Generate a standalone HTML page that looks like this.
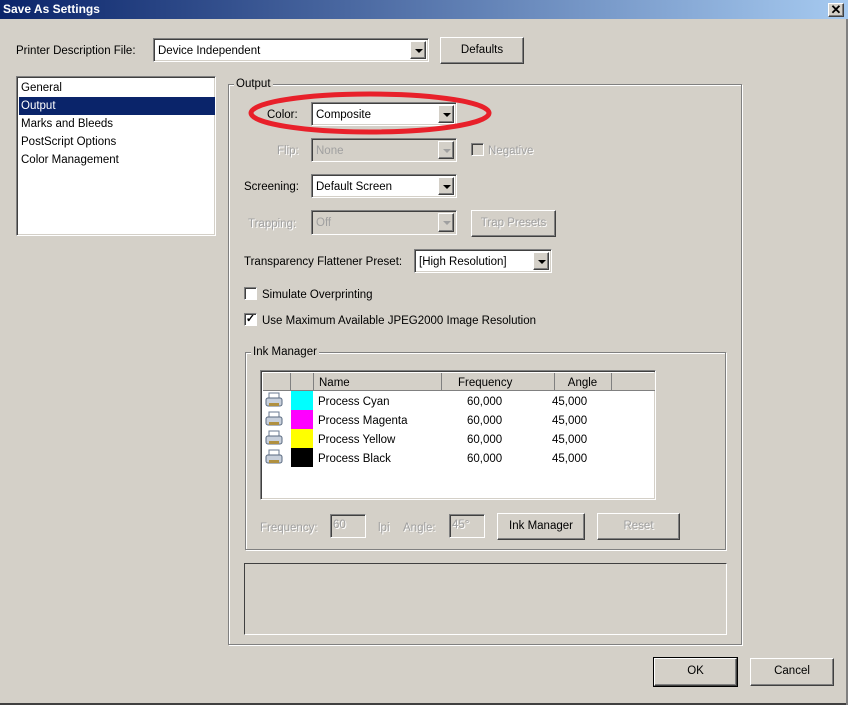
<!DOCTYPE html>
<html><head><style>
*{box-sizing:border-box;margin:0;padding:0}
body{width:848px;height:705px;background:#d4d0c8;font-family:"Liberation Sans",sans-serif;font-size:11.5px;color:#000;position:relative;overflow:hidden}
.a{position:absolute}
.t{position:absolute;white-space:nowrap;line-height:14px;margin-top:1px}
.g{color:#a0a0a0;text-shadow:1px 1px 0 #fff}
.sunk{position:absolute;background:#fff;border:1px solid;border-color:#808080 #fff #fff #808080;box-shadow:inset 1px 1px 0 #404040,inset -1px -1px 0 #d4d0c8}
.sunk.dis{background:#d4d0c8}
.btn{position:absolute;background:#d4d0c8;border:1px solid;border-color:#fff #404040 #404040 #fff;box-shadow:inset -1px -1px 0 #808080;text-align:center}
.arr{position:absolute;right:2px;top:2px;bottom:2px;width:16px;background:#d4d0c8;border:1px solid;border-color:#fff #404040 #404040 #fff;box-shadow:inset -1px -1px 0 #808080}
.arr:after{content:"";position:absolute;left:4px;top:7px;border-left:4px solid transparent;border-right:4px solid transparent;border-top:4px solid #000}
.arr.d:after{border-top-color:#a0a0a0}
.grp{position:absolute;border:1px solid #808080;box-shadow:1px 1px 0 #fff,inset 1px 1px 0 #fff}
.gl{position:absolute;background:#d4d0c8;padding:0 2px;line-height:13px}
.cb{position:absolute;width:13px;height:13px;background:#fff;border:1px solid;border-color:#808080 #fff #fff #808080;box-shadow:inset 1px 1px 0 #404040}
</style></head><body>
<div class="a" style="left:0;top:0;width:848px;height:19px;background:linear-gradient(to right,#0a246a,#a6caf0)"></div>
<div class="t" style="left:3px;top:1px;color:#fff;font-weight:bold;font-size:12px">Save As Settings</div>
<div class="btn" style="left:828px;top:3px;width:16px;height:14px;font-size:13px;line-height:11px;font-weight:bold">✕</div>
<div class="a" style="left:0;top:703px;width:848px;height:2px;background:#404040"></div>
<div class="a" style="left:846px;top:19px;width:2px;height:686px;background:#808080"></div>

<div class="t" style="left:16px;top:43px">Printer Description File:</div>
<div class="sunk" style="left:153px;top:38px;width:276px;height:24px"><div class="t" style="left:4px;top:4px">Device Independent</div><div class="arr"></div></div>
<div class="btn" style="left:440px;top:37px;width:84px;height:27px;line-height:24px">Defaults</div>

<div class="sunk" style="left:16px;top:76px;width:200px;height:160px">
<div class="t" style="left:4px;top:3px">General</div>
<div class="a" style="left:2px;top:20px;width:196px;height:18px;background:#0a246a"></div>
<div class="t" style="left:4px;top:21px;color:#fff">Output</div>
<div class="t" style="left:4px;top:39px">Marks and Bleeds</div>
<div class="t" style="left:4px;top:57px">PostScript Options</div>
<div class="t" style="left:4px;top:75px">Color Management</div>
</div>

<div class="grp" style="left:228px;top:84px;width:514px;height:561px"></div>
<div class="gl" style="left:234px;top:78px">Output</div>

<div class="t" style="left:267px;top:107px">Color:</div>
<div class="sunk" style="left:311px;top:102px;width:146px;height:24px"><div class="t" style="left:4px;top:4px">Composite</div><div class="arr"></div></div>
<svg class="a" style="left:245px;top:88px" width="250" height="52"><ellipse cx="125" cy="25" rx="119" ry="19" fill="none" stroke="#e8202a" stroke-width="5"/></svg>

<div class="t g" style="left:277px;top:143px">Flip:</div>
<div class="sunk dis" style="left:311px;top:138px;width:146px;height:24px"><div class="t" style="left:4px;top:4px;color:#a0a0a0">None</div><div class="arr d"></div></div>
<div class="cb" style="left:471px;top:143px;background:#d4d0c8"></div>
<div class="t g" style="left:488px;top:143px">Negative</div>

<div class="t" style="left:244px;top:179px">Screening:</div>
<div class="sunk" style="left:311px;top:174px;width:146px;height:24px"><div class="t" style="left:4px;top:4px">Default Screen</div><div class="arr"></div></div>

<div class="t g" style="left:248px;top:216px">Trapping:</div>
<div class="sunk dis" style="left:311px;top:210px;width:146px;height:25px"><div class="t" style="left:4px;top:4px;color:#a0a0a0">Off</div><div class="arr d"></div></div>
<div class="btn g" style="left:471px;top:210px;width:85px;height:27px;line-height:24px">Trap Presets</div>

<div class="t" style="left:244px;top:254px">Transparency Flattener Preset:</div>
<div class="sunk" style="left:414px;top:249px;width:138px;height:24px"><div class="t" style="left:4px;top:4px">[High Resolution]</div><div class="arr"></div></div>

<div class="cb" style="left:244px;top:287px"></div>
<div class="t" style="left:262px;top:287px">Simulate Overprinting</div>
<div class="cb" style="left:244px;top:313px;font-size:11px;line-height:10px;text-align:center;font-weight:bold">✓</div>
<div class="t" style="left:262px;top:313px">Use Maximum Available JPEG2000 Image Resolution</div>

<div class="grp" style="left:245px;top:352px;width:481px;height:198px"></div>
<div class="gl" style="left:251px;top:346px">Ink Manager</div>

<div class="sunk" style="left:260px;top:370px;width:396px;height:130px">
<div class="a" style="left:2px;top:2px;width:392px;height:18px;background:#d4d0c8;border-bottom:1px solid #808080"></div>
<div class="a" style="left:29px;top:2px;width:1px;height:18px;background:#808080"></div>
<div class="a" style="left:52px;top:2px;width:1px;height:18px;background:#808080"></div>
<div class="a" style="left:180px;top:2px;width:1px;height:18px;background:#808080"></div>
<div class="a" style="left:293px;top:2px;width:1px;height:18px;background:#808080"></div>
<div class="a" style="left:350px;top:2px;width:1px;height:18px;background:#808080"></div>
<div class="t" style="left:58px;top:4px">Name</div>
<div class="t" style="left:197px;top:4px">Frequency</div>
<div class="t" style="left:293px;top:4px;width:57px;text-align:center">Angle</div>
</div>
<div class="a" style="left:291px;top:391px;width:22px;height:19px;background:#0ff"></div>
<div class="a" style="left:291px;top:410px;width:22px;height:19px;background:#f0f"></div>
<div class="a" style="left:291px;top:429px;width:22px;height:19px;background:#ff0"></div>
<div class="a" style="left:291px;top:448px;width:22px;height:19px;background:#000"></div>
<svg class="a" style="left:265px;top:392px" width="18" height="76">
<g id="p"><rect x="4" y="1" width="10" height="6" fill="#fff" stroke="#6a7a90"/><rect x="1" y="6" width="16" height="8" rx="2" fill="#c8d0dc" stroke="#5a6a80"/><rect x="4" y="11" width="10" height="3" fill="#b09040"/></g>
<use href="#p" y="19"/><use href="#p" y="38"/><use href="#p" y="57"/></svg>
<div class="t" style="left:318px;top:394px">Process Cyan</div>
<div class="t" style="left:318px;top:413px">Process Magenta</div>
<div class="t" style="left:318px;top:432px">Process Yellow</div>
<div class="t" style="left:318px;top:451px">Process Black</div>
<div class="t" style="left:467px;top:394px">60,000</div><div class="t" style="left:552px;top:394px">45,000</div>
<div class="t" style="left:467px;top:413px">60,000</div><div class="t" style="left:552px;top:413px">45,000</div>
<div class="t" style="left:467px;top:432px">60,000</div><div class="t" style="left:552px;top:432px">45,000</div>
<div class="t" style="left:467px;top:451px">60,000</div><div class="t" style="left:552px;top:451px">45,000</div>

<div class="t g" style="left:260px;top:520px">Frequency:</div>
<div class="sunk dis" style="left:330px;top:514px;width:36px;height:24px"><div class="t g" style="left:2px;top:2px">60</div></div>
<div class="t g" style="left:378px;top:520px">lpi</div>
<div class="t g" style="left:403px;top:520px">Angle:</div>
<div class="sunk dis" style="left:449px;top:514px;width:36px;height:24px"><div class="t g" style="left:2px;top:2px">45°</div></div>
<div class="btn" style="left:497px;top:513px;width:88px;height:27px;line-height:25px">Ink Manager</div>
<div class="btn g" style="left:597px;top:513px;width:83px;height:27px;line-height:25px">Reset</div>

<div class="a" style="left:244px;top:563px;width:483px;height:72px;border:1px solid;border-color:#404040 #fff #fff #404040"></div>

<div class="btn" style="left:654px;top:658px;width:83px;height:28px;line-height:25px;outline:1px solid #000">OK</div>
<div class="btn" style="left:750px;top:658px;width:84px;height:28px;line-height:25px">Cancel</div>
</body></html>
